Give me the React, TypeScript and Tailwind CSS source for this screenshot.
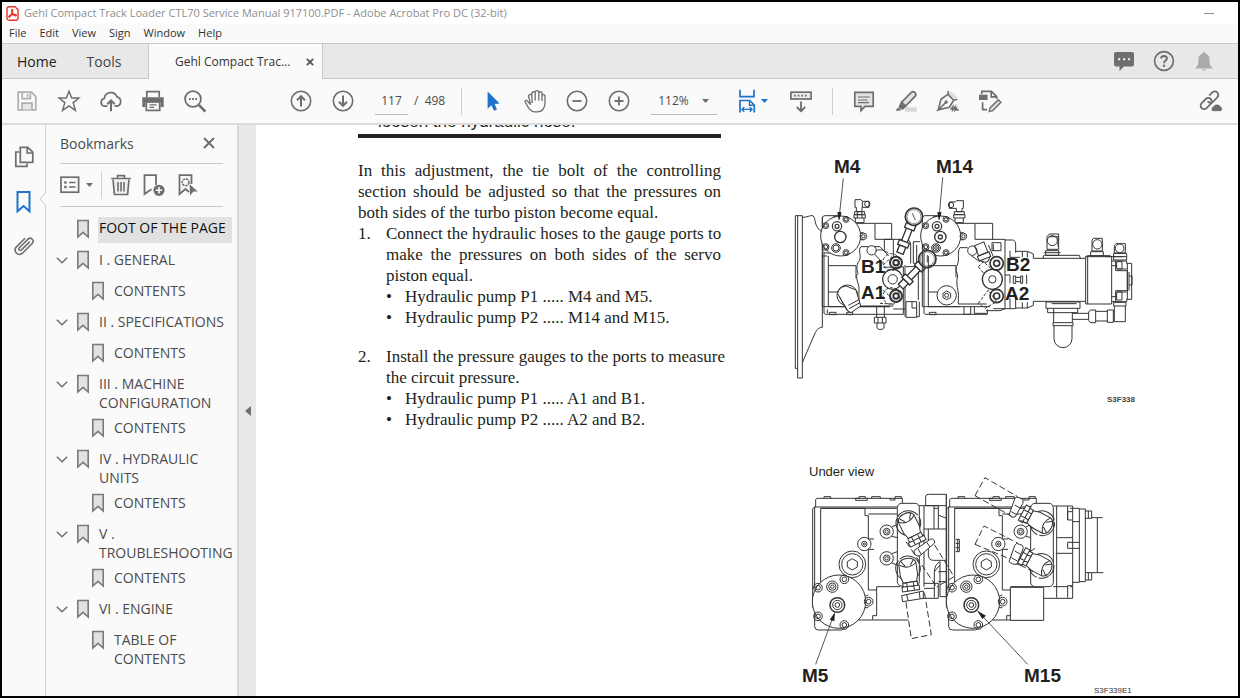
import React, { ReactNode } from "react";

const INK = "#6e6e6e";

function Icon({ children, color = INK, size = 24 }: { children: ReactNode; color?: string; size?: number }) {
  return (
    <svg
      width={size}
      height={size}
      viewBox={`0 0 ${size} ${size}`}
      fill="none"
      stroke={color}
      strokeWidth="1.7"
      aria-hidden="true"
      className="shrink-0"
    >
      {children}
    </svg>
  );
}

function ToolButton({ label, children }: { label: string; children: ReactNode }) {
  return (
    <button type="button" aria-label={label} className="flex h-10 w-[42px] shrink-0 items-center justify-center">
      {children}
    </button>
  );
}

/* ---------- Toolbar icons ---------- */

const SaveIcon = () => (
  <Icon color="#b0b0b0">
    <path d="M3.2 3.2H16.5L20.8 7.5V20.8H3.2Z" />
    <path d="M7.2 3.5V9.6H15.4V3.5M12.6 5V8" />
    <path d="M7 20.5V14.2H17V20.5" fill="#e6e6e6" />
  </Icon>
);
const StarIcon = () => (
  <Icon>
    <path d="M12 2.2L14.7 9H22L16.2 13.6L18.4 21.4L12 16.9L5.6 21.4L7.8 13.6L2 9H9.3Z" strokeWidth="1.5" />
  </Icon>
);
const CloudUpIcon = () => (
  <Icon>
    <path d="M8.5 17.2H5.6A3.9 3.9 0 0 1 5.3 9.5A6.6 6.6 0 0 1 18 7.8A4.8 4.8 0 0 1 17.6 17.2H15.5" />
    <path d="M12 22.2V11.8M8.3 15.3L12 11.4L15.7 15.3" strokeWidth="2" />
  </Icon>
);
const PrintIcon = () => (
  <Icon>
    <path d="M5.8 8V2.6H18.2V8" />
    <path d="M1.3 8.2H22.7V18H19.5V13H4.5V18H1.3Z" fill={INK} stroke="none" />
    <rect x="5.3" y="13" width="13.4" height="8.4" fill="#fafafa" />
    <path d="M8.5 15.8H15.5M8.5 18.4H13" strokeWidth="1.2" />
  </Icon>
);
const SearchIcon = () => (
  <Icon>
    <circle cx="10" cy="10" r="7.9" strokeWidth="1.8" />
    <path d="M15.8 15.8L22.4 22.6" strokeWidth="2.6" />
    <path d="M5.9 10H14.5" strokeDasharray="1.8 1.4" strokeWidth="1.8" />
  </Icon>
);
const UpIcon = () => (
  <Icon>
    <circle cx="12" cy="12" r="9.7" strokeWidth="1.6" />
    <path d="M12 17.5V7.5M8 11.2L12 7.2L16 11.2" strokeWidth="2" />
  </Icon>
);
const DownIcon = () => (
  <Icon>
    <circle cx="12" cy="12" r="9.7" strokeWidth="1.6" />
    <path d="M12 6.5V16.5M8 12.8L12 16.8L16 12.8" strokeWidth="2" />
  </Icon>
);
const CursorIcon = () => (
  <Icon color="#1f72c9">
    <path d="M6.6 2.6V19.8L10.5 16.2L13 21.8L16 20.4L13.6 15L18.6 14.4Z" fill="#1f72c9" stroke="none" />
  </Icon>
);
const HandIcon = () => (
  <Icon>
    <path
      d="M7.5 15.6L4.3 11.9C3.3 10.8 1.4 11.5 2.3 13.1C4 16 6.2 22.8 11.5 22.8H14.5C20 22.8 22 18 22 14V7.2C22 5 19 5 19 7.2M19 12V4.4C19 2.2 15.8 2.2 15.8 4.4V11.5M15.8 11.5V3.3C15.8 1.1 12.2 1.1 12.2 3.3V11.5M12.2 11.5V4.4C12.2 2.2 8.8 2.2 8.8 4.4V6L9.2 14M8.8 6.5C7.6 4.6 5 5.6 5.6 7.4L7.6 15.6"
      strokeWidth="1.3"
    />
  </Icon>
);
const MinusIcon = () => (
  <Icon>
    <circle cx="12" cy="12" r="9.7" strokeWidth="1.6" />
    <path d="M7.5 12H16.5" strokeWidth="1.8" />
  </Icon>
);
const PlusIcon = () => (
  <Icon>
    <circle cx="12" cy="12" r="9.7" strokeWidth="1.6" />
    <path d="M7.5 12H16.5M12 7.5V16.5" strokeWidth="1.8" />
  </Icon>
);
const Caret = ({ color = INK }: { color?: string }) => (
  <svg width="7" height="4" viewBox="0 0 7 4" fill={color} aria-hidden="true" className="shrink-0">
    <path d="M0 0H7L3.5 4Z" />
  </svg>
);
const FitIcon = () => (
  <Icon color="#1f72c9">
    <path d="M5 0.8V7.7H19V0.8" />
    <path d="M5 23.6V11.5H14.7L19.3 16V23.6" />
    <path d="M14.5 11.5V16.2H19M7 20.4H17M9.3 18L6.9 20.4L9.3 22.8M14.7 18L17.1 20.4L14.7 22.8" strokeWidth="1.4" />
  </Icon>
);
const ScrollIcon = () => (
  <Icon>
    <rect x="1.9" y="3.2" width="20.2" height="6.8" fill="#ececec" />
    <path d="M5 6.6H19.5" strokeDasharray="1.8 1.8" strokeWidth="1.8" />
    <path d="M12 12.5V22M7.8 18L12 22.2L16.2 18" strokeWidth="1.8" />
  </Icon>
);
const CommentIcon = () => (
  <Icon>
    <path d="M2.8 3.4H21.2V17.3H13L9 21.6V17.3H2.8Z" fill="#e4e4e4" />
    <path d="M6 8H18M6 11H15.5M6 13.6H17" strokeWidth="1.1" />
  </Icon>
);
const HighlightIcon = () => (
  <Icon>
    <rect x="11" y="18.3" width="11.7" height="4.4" fill="#d8d8d8" stroke="none" />
    <path d="M7.5 13.3L17.3 3.3C19.8 1.3 23.2 4.5 21.2 7.2L11.8 16.8Z" fill="#e4e4e4" />
    <path d="M7.2 12.4L12.6 17.6L9.3 20.4H6L4.6 17.5ZM4 18.2L6.8 21.8H1.6Z" fill={INK} stroke="none" />
  </Icon>
);
const SignIcon = () => (
  <Icon>
    <path d="M12.6 5.2L14.8 2L21.4 8L18.3 11Z" fill="#dedede" stroke="none" />
    <path d="M2.3 20.8L5 10.3L11.8 5.4L17.7 11.3L13.3 18.3L2.3 20.8L9.6 13.6M12 1.8L12.6 5.8M17.8 11L21.5 10.5" strokeWidth="1.6" />
    <circle cx="10.2" cy="13" r="0.8" fill={INK} />
    <path d="M14.4 20.8L17 17.3L16.6 21.2L19.4 17.6L18.9 21.2L20.6 19.4L20.4 21H22.8" strokeWidth="1.4" />
  </Icon>
);
const EditPdfIcon = () => (
  <Icon>
    <rect x="1" y="5.6" width="8.6" height="5.4" fill={INK} stroke="none" />
    <path d="M3.8 5V2.4H13.4L18.7 7.6V10M13.2 2.5V7.8H18.5M4.6 13.3V20.7H9.2" />
    <path d="M11.2 22.6L12 18.9L20.3 10.8L22.9 13.3L14.8 21.6Z" fill="#dedede" strokeWidth="1.4" />
  </Icon>
);
const LinkIcon = () => (
  <Icon>
    <g transform="rotate(-45 11 11)" strokeWidth="1.8">
      <rect x="-0.6" y="7.3" width="12.8" height="7" rx="3.5" />
      <path d="M13.5 7.3H18A3.5 3.5 0 0 1 18 14.3H11.8A3.5 3.5 0 0 1 8.4 10.2" />
    </g>
    <path d="M13.6 22.6A3.1 3.1 0 0 1 14.6 17A4 4 0 0 1 21.6 17.3A2.8 2.8 0 0 1 21.5 22.6Z" fill={INK} stroke="#fafafa" strokeWidth="0.8" />
  </Icon>
);

/* ---------- Bookmark panel ---------- */

const BookmarkGlyph = () => (
  <svg width="14" height="20" viewBox="0 0 14 20" fill="#e2e2e2" stroke="#7a7a7a" strokeWidth="1.6" aria-hidden="true" className="shrink-0">
    <path d="M1.8 1.5H12.2V18L7 13.4L1.8 18Z" />
  </svg>
);
const Chevron = () => (
  <svg width="12" height="7" viewBox="0 0 12 7" fill="none" stroke={INK} strokeWidth="1.5" aria-hidden="true" className="shrink-0">
    <path d="M0.8 0.8L6 5.8L11.2 0.8" />
  </svg>
);

type Section = { title: string; child: string };
const sections: Section[] = [
  { title: "I . GENERAL", child: "CONTENTS" },
  { title: "II . SPECIFICATIONS", child: "CONTENTS" },
  { title: "III . MACHINE CONFIGURATION", child: "CONTENTS" },
  { title: "IV . HYDRAULIC UNITS", child: "CONTENTS" },
  { title: "V . TROUBLESHOOTING", child: "CONTENTS" },
  { title: "VI . ENGINE", child: "TABLE OF CONTENTS" },
];

function Bookmarks() {
  return (
    <aside className="flex w-[193px] shrink-0 flex-col overflow-hidden border-r-2 border-[#d9d9d9] bg-[#fafafa]">
      <div className="mx-[14px] flex h-[39px] items-center justify-between border-b border-[#c8c8c8] pb-0.5 pr-1">
        <h2 className="text-[14px] text-[#4b4b4b]">Bookmarks</h2>
        <button type="button" aria-label="Close bookmarks" className="flex h-5 w-5 items-center justify-center">
          <svg width="12" height="12" viewBox="0 0 12 12" stroke={INK} strokeWidth="2" aria-hidden="true">
            <path d="M1 1L11 11M11 1L1 11" />
          </svg>
        </button>
      </div>
      <div className="mx-[14px] flex h-[43px] items-center border-b border-[#c8c8c8]">
        <button type="button" aria-label="Options" className="flex items-center gap-1.5">
          <svg width="20" height="18" viewBox="0 0 20 18" fill="none" stroke={INK} strokeWidth="1.7" aria-hidden="true">
            <rect x="1" y="1.2" width="17.6" height="15" />
            <path d="M9 6.5H15.5M9 11H15.5" />
            <rect x="4.2" y="5.3" width="2.4" height="2.4" fill={INK} stroke="none" />
            <rect x="4.2" y="9.8" width="2.4" height="2.4" fill={INK} stroke="none" />
          </svg>
          <Caret />
        </button>
        <span className="ml-2 h-7 w-px bg-[#d0d0d0]" />
        <button type="button" aria-label="Delete bookmark" className="ml-[7px]">
          <Icon>
            <path d="M4 6.5L5.4 21.5H18.6L20 6.5" fill="#f0f0f0" />
            <path d="M2.2 5.5H21.8M8.5 5V2.6H15.5V5M9 9V18.5M12 9V18.5M15 9V18.5" strokeWidth="1.6" />
          </Icon>
        </button>
        <button type="button" aria-label="New bookmark" className="ml-2">
          <Icon>
            <path d="M10.5 16.2L3.5 21V2.2H15V12" strokeWidth="1.8" />
            <circle cx="18" cy="17.3" r="5.6" fill={INK} stroke="none" />
            <path d="M14.8 17.3H21.2M18 14.1V20.5" stroke="#fafafa" strokeWidth="1.6" />
          </Icon>
        </button>
        <button type="button" aria-label="Find current bookmark" className="ml-[10px]">
          <Icon>
            <path d="M16.5 11V2.2H4.5V21L10.5 16L14 19" strokeWidth="1.8" />
            <circle cx="10.6" cy="9.3" r="3.4" strokeDasharray="2.4 0.8" strokeWidth="1.6" />
            <path d="M14.6 11.2L22.8 18.6H18.5L15 22.4Z" fill={INK} stroke="none" />
          </Icon>
        </button>
      </div>
      <ul className="mt-[6px] text-[14px] leading-[19px] text-[#4b4b4b]">
        <li className="flex min-h-[31px] items-start pl-[30px] pr-[5px] pt-1">
          <span className="mt-0.5 flex">
            <BookmarkGlyph />
          </span>
          <a href="#foot" className="ml-2 flex-1 whitespace-nowrap bg-[#e1e1e1] pb-1.5 pl-px pt-px text-[#111111]">
            FOOT OF THE PAGE
          </a>
        </li>
        {sections.map((s) => (
          <React.Fragment key={s.title}>
            <li className="flex min-h-[31px] items-start pl-[10px] pt-[6px]">
              <button type="button" aria-label={`Collapse ${s.title}`} className="mt-[7px]">
                <Chevron />
              </button>
              <span className="ml-2 flex">
                <BookmarkGlyph />
              </span>
              <a href="#section" className="ml-[9px] flex-1">
                {s.title}
              </a>
            </li>
            <li className="flex min-h-[31px] items-start pl-[45px] pt-[6px]">
              <BookmarkGlyph />
              <a href="#contents" className="ml-[9px] flex-1">
                {s.child}
              </a>
            </li>
          </React.Fragment>
        ))}
      </ul>
    </aside>
  );
}

/* ---------- Technical drawings (drawn in thirds of a pixel) ---------- */

function Rings({ x, y, r, w = 3 }: { x: number; y: number; r: number[]; w?: number }) {
  return (
    <g strokeWidth={w}>
      {r.map((v) => (
        <circle key={v} cx={x} cy={y} r={v} />
      ))}
    </g>
  );
}

function SideCover() {
  return (
    <g>
      <path d="M127 204Q128 198 134 197H182M127 204V300Q128 308 136 309H160M160 200L182 197M238 250L250 247M238 268L250 270" />
      <circle cx="182" cy="258" r="60" fill="#fff" />
      <Rings x={250} y={259} r={[10, 5]} />
      <Rings x={137} y={227} r={[9, 5]} />
      <Rings x={198} y={208} r={[9, 5]} />
      <Rings x={137} y={291} r={[10, 6]} />
      <Rings x={198} y={308} r={[9, 5]} />
      <Rings x={171} y={229} r={[14, 6]} w={3.5} />
      <Rings x={168} y={294} r={[13, 9]} />
    </g>
  );
}

function Gauge({ x, y, angle, length }: { x: number; y: number; angle: number; length: number }) {
  return (
    <g transform={`translate(${x} ${y}) rotate(${angle})`} fill="#fff" strokeWidth="4">
      <rect x="-9" y="25" width="18" height={length} />
      <rect x="-15" y="24" width="30" height="16" />
      <rect x="-16" y={length - 8} width="32" height="15" />
      <rect x="-10" y={length + 7} width="20" height="22" />
      <circle cx="0" cy="0" r="26" strokeWidth="5" />
      <circle cx="0" cy="0" r="21" strokeWidth="1.5" />
    </g>
  );
}

function SideViewFigure() {
  return (
    <svg viewBox="780 150 370 260" className="h-[260px] w-[370px]" role="img" aria-label="Side view of hydraulic pumps">
      <g transform="translate(780 150) scale(0.33333)" fill="none" stroke="#333" strokeWidth="3">
        {/* mounting plate */}
        <path d="M67 197H46V655H53V684H67ZM53 197V655M67 202C80 203 90 195 99 197C109 207 100 229 127 247M127 200V532C113 533 109 542 104 552L67 638" />
        {/* first pump housing */}
        <path d="M222 220H335V268H285V220M313 268V300M313 268H376M127 309V470M132 309V490Q133 494 145 493H370V470M142 318H127M145 318V470H330M145 347H228V385M145 426H176M127 470H330" />
        <path d="M243 290C232 300 246 315 238 332C226 347 232 364 234 370C222 380 240 405 237 422C236 445 238 455 240 468M243 290H266M240 468H340" />
        <path d="M142 478V490M148 487H168V494H148ZM200 487H218V494H200ZM375 345V500M378 350H415V450M378 455H410V502H378ZM396 455V474H410M376 268Q392 268 392 285V340M400 275H420M410 285V340M400 275V340H430M418 455V500H410" />
        {/* pipe fitting on top */}
        <path d="M225 149H243L247 154H267V172H246V185H229V172H225ZM247 154V172M224 185H254V194H224ZM222 194H256V204H222ZM226 204V218H252V204M232 185V204M246 185V204" />
        <path d="M550 152H530L526 156H508V175H529V185H546V175H550ZM523 185H553V194H523ZM521 194H555V204H521ZM525 204V218H550V204" />
        <circle cx="262" cy="162" r="8" />
        <circle cx="513" cy="165" r="8" />
        <SideCover />
        <Rings x={181} y={261} r={[17]} w={4} />
        <g transform="translate(300 0)">
          <SideCover />
          <Rings x={181} y={261} r={[17, 6]} w={4} />
          <Rings x={168} y={294} r={[4]} />
        </g>
        {/* elbows and lower fittings */}
        <circle cx="202" cy="436" r="31" />
        <path d="M173 430Q176 412 198 408L228 420L242 468L213 488L200 480Z" fill="#fff" />
        <path d="M205 466L235 450M207 476L240 458M178 440L205 485" />
        <path d="M290 470V502M313 470V502M283 502H318V519H283ZM291 519V534L296 538H307L312 534V519M294 502V519M307 502V519" />
        <circle cx="275" cy="301" r="14" fill="#fff" />
        <path d="M282 290H300L326 318M284 312L300 330M286 304C291 298 310 296 325 310" />
        <g strokeDasharray="9 5">
          <circle cx="334" cy="336" r="25" />
          <circle cx="334" cy="438" r="25" />
          <path d="M310 345L336 320M310 420L336 446M300 460L340 462" />
        </g>
        <path d="M310 352C330 350 350 355 370 350V470M340 268V320M360 268V290M340 477H376" />
        <Rings x={338} y={388} r={[30]} w={3.5} />
        <Rings x={338} y={388} r={[14]} />
        <Gauge x={402} y={200} angle={21} length={88} />
        <Gauge x={442} y={327} angle={44} length={86} />
        <path d="M397 190L406 210M442 315V337" strokeWidth="2.5" />
        <Rings x={348} y={338} r={[18, 8]} w={6} />
        <Rings x={348} y={438} r={[18, 8]} w={6} />
        {/* second pump housing */}
        <path d="M527 220H638V268M585 222V268H675M427 309V470M432 309V490Q433 494 445 493H622V478M445 318V470H630M445 347H528V382M445 426H473M427 470H540M540 293C530 305 540 325 532 345C523 355 532 366 533 380C525 400 538 425 535 445V462H620M540 293H563M448 487H468V494H448ZM552 470V493H572V470M583 470V490H620" />
        <Rings x={500} y={436} r={[29]} />
        <path d="M489 430L500 423L512 430V443L500 449L489 443Z" />
        <circle cx="500" cy="436" r="6" />
        <circle cx="577" cy="302" r="14" />
        <g transform="rotate(-22 606 305)">
          <rect x="592" y="280" width="30" height="33" />
          <rect x="588" y="313" width="37" height="15" />
          <path d="M592 328Q606 350 622 328" />
        </g>
        <path d="M575 318L600 335M625 285L640 320" />
        <g strokeDasharray="9 5">
          <path d="M595 350L610 335L640 362L615 375ZM595 460L625 420L650 455L615 475Z" />
        </g>
        <circle cx="637" cy="388" r="30" fill="#fff" strokeWidth="4" />
        <circle cx="637" cy="388" r="11" />
        <Rings x={650} y={340} r={[20, 9]} w={5} />
        <Rings x={650} y={438} r={[20, 9]} w={5} />
        <path d="M675 268V478M636 278H663V302H636ZM640 282V302M675 270H697Q707 270 707 285V308M707 440V476H640M618 482H660L675 476M707 304H742L760 312V325M760 454V466L742 474H707M727 305V322M742 305V322M720 322H690M727 457V474M742 457V474M690 445V476M690 302V345M700 378H707V400H700ZM707 382H722M707 395H722M722 378H728V400H722ZM740 374V402M675 375H690V400" />
        {/* motor cylinder */}
        <path d="M760 325H917M760 454H917M790 325V318Q790 316 794 316H898L901 325M917 320H995V462H917ZM923 320V462M917 320Q917 318 923 317H990L995 320" />
        <path d="M801 260L808 252H836V298H801ZM806 260H834V290M797 302H836V316H797ZM792 308H842M936 270L941 265H967V303H936ZM932 305H970V318H932ZM1003 286L1008 281H1036V309H1003ZM1001 310H1040V330H1001ZM1001 320H1040M975 320H1030" />
        <circle cx="817" cy="272" r="15" />
        <circle cx="952" cy="283" r="14" />
        <circle cx="1019" cy="295" r="13" />
        <path d="M995 333H1040V340H1055V448H1040V455H995M1007 362H1042V422H1007M1042 340V448M1047 366V422M1047 378H1056V405H1047M1010 335H1026V357H1010ZM1010 426H1026V450H1010ZM1007 362V333M1007 422V455M1012 357H1040M1012 426H1040M995 347H1010M995 440H1010" />
        {/* drain cup and return pipe */}
        <path d="M798 456H900V475H798ZM803 475V488H893V475M815 461H890M821 476V518M877 488V518M819 518H879V527H819ZM822 527V566A27 27 0 0 0 876 566V527M877 490H926M877 508H926M926 486L931 480H947V518H931L926 512ZM947 484H982M947 513H982M982 480H1000V517H982ZM1001 457H1038V468H1001ZM1003 468V515H1036V468M1000 485H1003" />
        {/* leader lines */}
        <path d="M190 85L177 208M488 82L477 208" strokeWidth="2.5" />
        <path d="M177 212L172 186L185 187ZM477 212L472 186L485 187Z" fill="#222" stroke="none" />
      </g>
      <g className="font-['Liberation_Sans',sans-serif] text-[19px] font-bold" fill="#231f20">
        <text x="834" y="173">M4</text>
        <text x="936" y="173">M14</text>
        <text x="861" y="273">B1</text>
        <text x="861" y="299">A1</text>
        <text x="1006" y="271">B2</text>
        <text x="1005" y="300">A2</text>
      </g>
      <text x="1107" y="402" className="font-['Liberation_Sans',sans-serif] text-[8px] font-bold" fill="#444">
        S3F338
      </text>
    </svg>
  );
}

function UnderBody() {
  return (
    <g>
      <path d="M77 156V134Q78 130 84 130H337V150M102 130V125H122V130M197 136V130H207V125H226V130M197 136H232V130M245 130V125H271V130M300 130V135H315V125H334V130" />
      <path d="M72 156H322M68 162V458H74M68 162L74 156V400M92 400V160H225V182H235V405H260M235 177H322M260 395H330M260 395V482H248V495H355M205 495H248M92 160H320" />
      <circle cx="290" cy="230" r="20" />
      <circle cx="290" cy="310" r="20" />
      <circle cx="223" cy="267" r="20" fill="#fff" />
      <path d="M305 216L322 208M305 244L322 248M305 296L322 290M305 324L322 330M235 252H252M235 283H252" />
      <Rings x={290} y={230} r={[10, 5]} />
      <Rings x={290} y={310} r={[10, 5]} />
      <Rings x={223} y={267} r={[8, 3]} />
      <circle cx="187" cy="328" r="40" fill="#fff" />
      <circle cx="187" cy="328" r="32" />
      <path d="M172 320L187 311L202 320V336L187 345L172 336Z" />
      <path d="M74 458V515Q75 525 85 525H155L165 518M222 425L235 420M222 458L235 458" />
      <circle cx="147" cy="440" r="80" fill="#fff" />
      <Rings x={84} y={398} r={[13, 7]} />
      <Rings x={163} y={373} r={[13, 7]} />
      <Rings x={236} y={440} r={[13, 7]} />
      <Rings x={84} y={484} r={[13, 7]} />
      <Rings x={163} y={510} r={[13, 7]} />
      <Rings x={127} y={395} r={[17, 11, 5]} />
      <Rings x={142} y={450} r={[22]} w={4.5} />
      <Rings x={142} y={450} r={[14, 7]} />
    </g>
  );
}

function Elbow({ x, y, angle }: { x: number; y: number; angle: number }) {
  return (
    <g transform={`translate(${x} ${y}) rotate(${angle})`}>
      <circle cx="0" cy="0" r="37" strokeDasharray="70 6" />
      <path d="M-26 -14Q-22 -30 0 -30Q22 -30 26 -14V22L20 42H-20L-26 22Z" fill="#fff" />
      <path d="M-26 -14Q0 6 26 -14M-20 -25L-8 -8M20 -25L8 -8" />
      <path d="M-22 42H22V54H-22ZM-26 54H26V68H-26ZM-10 42V68M10 42V68" fill="#fff" />
    </g>
  );
}

function UnderViewFigure() {
  return (
    <svg viewBox="780 455 370 241" className="h-[241px] w-[370px]" role="img" aria-label="Under view of hydraulic pumps">
      <g transform="translate(790 455) scale(0.33333)" fill="none" stroke="#333" strokeWidth="3">
        <UnderBody />
        {/* coupling between the pumps */}
        <path d="M387 152H402V395M402 152H445V222H402M407 152V125Q408 118 415 118H469V425H450M432 152V222M407 152H469M445 180L469 190M432 160H445M415 222V300Q416 316 430 316H469M433 428V350Q434 328 450 320V425M402 385H445V430H395M402 400H433M445 350H469M445 380H469M395 240H402M469 118V456M445 222H469M433 350L450 330" />
        <rect x="322" y="145" width="66" height="248" rx="13" fill="#fff" />
        <Elbow x={355} y={204} angle={-26} />
        <Elbow x={354} y={340} angle={-8} />
        <path d="M372 287L422 252Q434 250 434 264L390 302Q372 306 372 287ZM384 281L394 299M410 262L420 276M335 422L400 408V430L338 440ZM350 419L354 436M388 411L390 431" fill="#fff" />
        <g strokeDasharray="19 9">
          <path d="M348 260L440 396M434 270L492 365L440 396M348 442L364 551L424 539L403 410" />
        </g>
        <g transform="translate(402 0)">
          <UnderBody />
        </g>
        <path d="M497 253H508V290H497M503 253V290M497 265H508M497 278H508" />
        {/* right-hand end of the second pump */}
        <path d="M790 153H848V195H833V153M800 153V428M840 160H868V382H848M833 195V170H848M848 195V430H762M848 200H868M800 248H848M800 295H848M833 262H868M833 280H868M833 262V280M868 162H886V380H868M886 168H905V190H886M895 168V190M905 188H938M922 188V353M905 353H940M886 353H905V375H886M895 353V375M840 395H848M833 428V392H848M790 395H833" />
        <path d="M661 397H761V496H661Z" fill="#fff" />
        <rect x="722" y="145" width="68" height="250" rx="13" fill="#fff" />
        <Elbow x={757} y={205} angle={118} />
        <Elbow x={755} y={333} angle={118} />
        <path d="M680 126L697 132Q702 137 698 146L675 186Q666 190 657 180L674 132ZM674 150L692 160M664 170L682 180M680 265L697 271Q702 276 698 285L680 328Q666 330 657 320L674 272ZM674 288L692 298M664 308L682 318" fill="#fff" />
        <g strokeDasharray="19 9">
          <path d="M555 122L585 68L683 125M555 122L665 184M555 268L582 213L683 264M555 268L660 312M690 195L735 222M690 330L730 350M720 290L735 280" />
        </g>
        {/* leader lines */}
        <path d="M77 628L132 478M713 628L562 467" strokeWidth="2.5" />
        <path d="M135 472L133 499L119 494ZM562 467L588 482L577 492Z" fill="#222" stroke="none" />
      </g>
      <text x="809" y="476" className="font-['Liberation_Sans',sans-serif] text-[13px]" fill="#231f20">
        Under view
      </text>
      <g className="font-['Liberation_Sans',sans-serif] text-[19px] font-bold" fill="#231f20">
        <text x="802" y="682">M5</text>
        <text x="1024" y="682">M15</text>
      </g>
      <text x="1094" y="693" className="font-['Liberation_Sans',sans-serif] text-[8px]" fill="#333">
        S3F339E1
      </text>
    </svg>
  );
}

/* ---------- Document page ---------- */

function Step({ n, lines, last, items }: { n: string; lines: string[]; last: string; items: string[] }) {
  return (
    <div className="flex">
      <span className="w-7 shrink-0">{n}</span>
      <div className="min-w-0 flex-1">
        {lines.map((l) => (
          <p key={l} className="whitespace-nowrap [text-align-last:justify]">
            {l}
          </p>
        ))}
        <p>{last}</p>
        <ul>
          {items.map((i) => (
            <li key={i} className="flex">
              <span className="w-[19px] shrink-0">•</span>
              {i}
            </li>
          ))}
        </ul>
      </div>
    </div>
  );
}

function Page() {
  return (
    <main className="flex min-w-0 flex-1 items-start overflow-hidden bg-white pl-[102px] text-[#231f20]">
      <article className="w-[363px] shrink-0 font-['Liberation_Serif',serif] text-[17px] leading-[21px]">
        <p className="-mt-[13px] ml-5 h-[22px] font-['Liberation_Sans',sans-serif] leading-[19px]">loosen the hydraulic hose.</p>
        <div className="h-1 bg-[#231f20]" />
        <div className="mt-[22px]">
          <p className="whitespace-nowrap [text-align-last:justify]">In this adjustment, the tie bolt of the controlling</p>
          <p className="whitespace-nowrap [text-align-last:justify]">section should be adjusted so that the pressures on</p>
          <p>both sides of the turbo piston become equal.</p>
        </div>
        <Step
          n="1."
          lines={["Connect the hydraulic hoses to the gauge ports to", "make the pressures on both sides of the servo"]}
          last="piston equal."
          items={["Hydraulic pump P1 ..... M4 and M5.", "Hydraulic pump P2 ..... M14 and M15."]}
        />
        <div className="mt-[18px]">
          <Step
            n="2."
            lines={["Install the pressure gauges to the ports to measure"]}
            last="the circuit pressure."
            items={["Hydraulic pump P1 ..... A1 and B1.", "Hydraulic pump P2 ..... A2 and B2."]}
          />
        </div>
      </article>
      <div className="ml-[59px] mt-[25px] flex shrink-0 flex-col gap-[45px]">
        <SideViewFigure />
        <UnderViewFigure />
      </div>
    </main>
  );
}

export default function App() {
  return (
    <div className="flex h-screen flex-col overflow-hidden border-2 border-black bg-[#fafafa] font-['Open_Sans','Noto_Sans',sans-serif] text-[#333]">
      <header className="flex h-[22px] shrink-0 items-center bg-white pl-1 pr-6">
        <svg width="13" height="15" viewBox="0 0 13 15" fill="none" stroke="#e8342a" aria-hidden="true">
          <path d="M1 3Q1 0.8 3 0.8H9L12 3.8V12Q12 14.2 10 14.2H3Q1 14.2 1 12Z" strokeWidth="1.4" />
          <path d="M6.3 3.5C5.2 3.5 5.8 6 7 7.8C8.2 9.6 10 10.2 10.2 9.4C10.4 8.4 7 8.2 5 9C3 9.8 2.4 11 3.2 11.2C4.3 11.4 7.6 3.8 6.3 3.5Z" strokeWidth="1.5" />
        </svg>
        <h1 className="ml-[5px] text-[11px] text-[#8e8e8e]">
          Gehl Compact Track Loader CTL70 Service Manual 917100.PDF - Adobe Acrobat Pro DC (32-bit)
        </h1>
        <button type="button" aria-label="Minimize" className="ml-auto flex h-4 w-[10px] items-center">
          <span className="h-px w-[10px] bg-[#8a8a8a]" />
        </button>
      </header>
      <nav className="flex h-[19px] shrink-0 items-center gap-[13px] pl-[7px] text-[11px] text-[#333]">
        {["File", "Edit", "View", "Sign", "Window", "Help"].map((m) => (
          <button key={m} type="button">
            {m}
          </button>
        ))}
      </nav>
      <div className="flex h-9 shrink-0 border-t border-[#c9c9c9] bg-[#e8e8e8]">
        <div className="flex w-[147px] shrink-0 items-center gap-[30px] border-b border-r border-[#c9c9c9] pl-[15px] text-[14px]">
          <button type="button" className="text-[#222]">
            Home
          </button>
          <button type="button" className="text-[#444]">
            Tools
          </button>
        </div>
        <div className="flex w-[173px] shrink-0 items-center justify-between bg-[#fafafa] pl-[26px] pr-2 text-[12px]">
          <button type="button">Gehl Compact Trac...</button>
          <button type="button" aria-label="Close tab">
            <svg width="8" height="8" viewBox="0 0 8 8" stroke="#555" strokeWidth="1.8" aria-hidden="true">
              <path d="M0.8 0.8L7.2 7.2M7.2 0.8L0.8 7.2" />
            </svg>
          </button>
        </div>
        <div className="flex flex-1 items-center justify-end gap-4 border-b border-l border-[#c9c9c9] pr-[22px]">
          <button type="button" aria-label="Comments">
            <Icon>
              <path d="M3.8 3H20.2Q22 3 22 4.8V15.6Q22 17.4 20.2 17.4H12L7.5 22V17.4H3.8Q2 17.4 2 15.6V4.8Q2 3 3.8 3Z" fill={INK} stroke="none" />
              <path d="M6.2 10.2H18" stroke="#fff" strokeDasharray="2 3" strokeWidth="2" />
            </Icon>
          </button>
          <button type="button" aria-label="Help">
            <Icon>
              <circle cx="12" cy="12" r="9.4" />
              <path d="M9.1 9.6C9.1 6.2 15 6.2 14.9 9.5C14.9 11.6 12 11.6 12 14.2" strokeWidth="2" />
              <circle cx="12" cy="16.8" r="1.2" fill={INK} stroke="none" />
            </Icon>
          </button>
          <button type="button" aria-label="Notifications">
            <Icon>
              <path d="M12 3A1.8 1.8 0 0 1 13.6 4.8C17 5.6 17.6 8.4 17.6 11.4C17.6 15.6 18.4 17 20.4 18.6V19.4H3.6V18.6C5.6 17 6.4 15.6 6.4 11.4C6.4 8.4 7 5.6 10.4 4.8A1.8 1.8 0 0 1 12 3ZM9.8 20.2H14.2Q12 23 9.8 20.2Z" fill="#ababab" stroke="none" />
            </Icon>
          </button>
        </div>
      </div>
      <div className="flex h-[46px] shrink-0 items-center border-b-2 border-[#dcdcdc] pl-1 pr-1.5" role="toolbar">
        <ToolButton label="Save"><SaveIcon /></ToolButton>
        <ToolButton label="Star"><StarIcon /></ToolButton>
        <ToolButton label="Upload"><CloudUpIcon /></ToolButton>
        <ToolButton label="Print"><PrintIcon /></ToolButton>
        <ToolButton label="Find"><SearchIcon /></ToolButton>
        <span className="w-16 shrink-0" />
        <ToolButton label="Previous page"><UpIcon /></ToolButton>
        <ToolButton label="Next page"><DownIcon /></ToolButton>
        <input
          aria-label="Page number"
          defaultValue="117"
          className="ml-[11px] h-[27px] w-[33px] border-b border-[#bcbcbc] bg-transparent text-center text-[12px] text-[#4b4b4b] outline-none"
        />
        <span className="ml-[6px] text-[12px] text-[#4b4b4b]">/&nbsp; 498</span>
        <span className="ml-4 h-[27px] w-px bg-[#cfcfcf]" />
        <span className="w-[10px]" />
        <ToolButton label="Select"><CursorIcon /></ToolButton>
        <ToolButton label="Pan"><HandIcon /></ToolButton>
        <ToolButton label="Zoom out"><MinusIcon /></ToolButton>
        <ToolButton label="Zoom in"><PlusIcon /></ToolButton>
        <label className="ml-[11px] flex h-[27px] w-[66px] shrink-0 items-center border-b border-[#bcbcbc] pr-2">
          <select aria-label="Zoom level" className="w-full appearance-none bg-transparent pl-[7px] text-[12px] text-[#4b4b4b] outline-none">
            <option>112%</option>
          </select>
          <Caret />
        </label>
        <button type="button" aria-label="Fit width" className="ml-[18px] flex items-center gap-[2px]">
          <FitIcon />
          <Caret color="#1f72c9" />
        </button>
        <span className="w-3 shrink-0" />
        <ToolButton label="Scroll mode"><ScrollIcon /></ToolButton>
        <span className="ml-[10px] h-[27px] w-px bg-[#cfcfcf]" />
        <span className="w-[10px]" />
        <ToolButton label="Add comment"><CommentIcon /></ToolButton>
        <ToolButton label="Highlight"><HighlightIcon /></ToolButton>
        <ToolButton label="Sign"><SignIcon /></ToolButton>
        <ToolButton label="Edit PDF"><EditPdfIcon /></ToolButton>
        <span className="flex-1" />
        <ToolButton label="Share link"><LinkIcon /></ToolButton>
      </div>
      <div className="flex min-h-0 flex-1">
        <div className="relative flex w-11 shrink-0 flex-col items-center border-r border-[#d0d0d0] pt-5">
          <button type="button" aria-label="Page thumbnails" className="h-6">
            <Icon>
              <path d="M7.5 7H3.8V21.3H15V18.6" />
              <path d="M8.3 2.3H15.8L20.8 7.2V17.3H8.3Z" />
              <path d="M15.2 2.8V8H20.5" />
            </Icon>
          </button>
          <button type="button" aria-label="Bookmarks" className="mt-[21px] h-6">
            <Icon color="#1f72c9">
              <path d="M5.5 2H17.5V21.3L11.5 16L5.5 21.3Z" strokeWidth="2" />
            </Icon>
          </button>
          <button type="button" aria-label="Attachments" className="mt-5 h-6">
            <Icon>
              <path
                d="M17.8 7.6L9.5 15.9C7.8 17.4 5.9 15.4 7.4 13.8L16 5.2C18.8 2.6 23 6.4 20.2 9.5L10.4 19.2C6.4 22.8 0.5 17.2 4.4 12.9L13 4.3"
                strokeWidth="1.6"
              />
            </Icon>
          </button>
          <svg width="7" height="14" viewBox="0 0 7 14" fill="#fafafa" stroke="#c8c8c8" aria-hidden="true" className="absolute -right-px top-[67px]">
            <path d="M7 0L1 7L7 14" />
          </svg>
        </div>
        <Bookmarks />
        <button type="button" aria-label="Collapse panel" className="flex w-[17px] shrink-0 items-center justify-center bg-[#e8e8e8]">
          <svg width="6" height="10" viewBox="0 0 6 10" fill={INK} aria-hidden="true">
            <path d="M6 0V10L0 5Z" />
          </svg>
        </button>
        <Page />
      </div>
    </div>
  );
}
